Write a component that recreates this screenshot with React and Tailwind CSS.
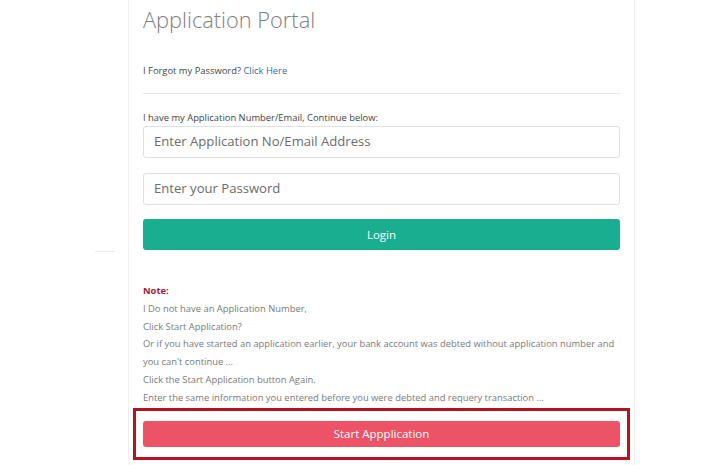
export default function App() {
  const notes = [
    'I Do not have an Application Number,',
    'Click Start Application?',
    'Or if you have started an application earlier, your bank account was debted without application number and',
    "you can't continue ...",
    'Click the Start Application button Again.',
    'Enter the same information you entered before you were debted and requery transaction ...',
  ];

  return (
    <div className="w-[720px] h-[465px] bg-white overflow-hidden relative font-['Open_Sans',sans-serif]">
      {/* stray divider on the left */}
      <div className="absolute left-[95px] top-[251px] w-[20px] h-px bg-[#eaeaea]" />

      <div className="ml-[128px] w-[507px] h-full border-x border-[#f0f0f0] px-[14px]">
        <h1 className="pt-[4px] text-[21.8px] leading-[32px] text-[#808080] font-light">
          Application Portal
        </h1>

        <p className="mt-[28px] text-[9.4px] leading-[14px] text-[#444]">
          I Forgot my Password? <span className="text-[#2f6fa3]">Click Here</span>
        </p>

        <div className="mt-[15px] h-px bg-[#e6e6e6]" />

        <p className="mt-[17px] text-[9.4px] leading-[14px] text-[#444]">
          I have my Application Number/Email, Continue below:
        </p>

        <div className="mt-px h-[32px] border border-[#e0e0e0] rounded-[3px] flex items-center px-[10px] text-[13.1px] text-[#6b6b6b]">
          Enter Application No/Email Address
        </div>

        <div className="mt-[15px] h-[32px] border border-[#e0e0e0] rounded-[3px] flex items-center px-[10px] text-[13.1px] text-[#6b6b6b]">
          Enter your Password
        </div>

        <div className="mt-[14px] h-[31px] rounded-[3px] bg-[#1aae91] flex items-center justify-center text-[11.5px] text-white font-medium">
          Login
        </div>

        <div className="mt-[32px] text-[9.4px] leading-[17.8px]">
          <p className="font-bold text-[#9e2138]">Note:</p>
          {notes.map((n) => (
            <p key={n} className="text-[#7a7a7a]">
              {n}
            </p>
          ))}
        </div>

        <div className="-mx-[10px] mt-[1px] h-[52px] border-[3px] border-[#b3141e] px-[7px] pt-[10px]">
          <div className="h-[26px] rounded-[3px] bg-[#ec5366] flex items-center justify-center text-[11.5px] text-white">
            Start Appplication
          </div>
        </div>
      </div>
    </div>
  );
}
